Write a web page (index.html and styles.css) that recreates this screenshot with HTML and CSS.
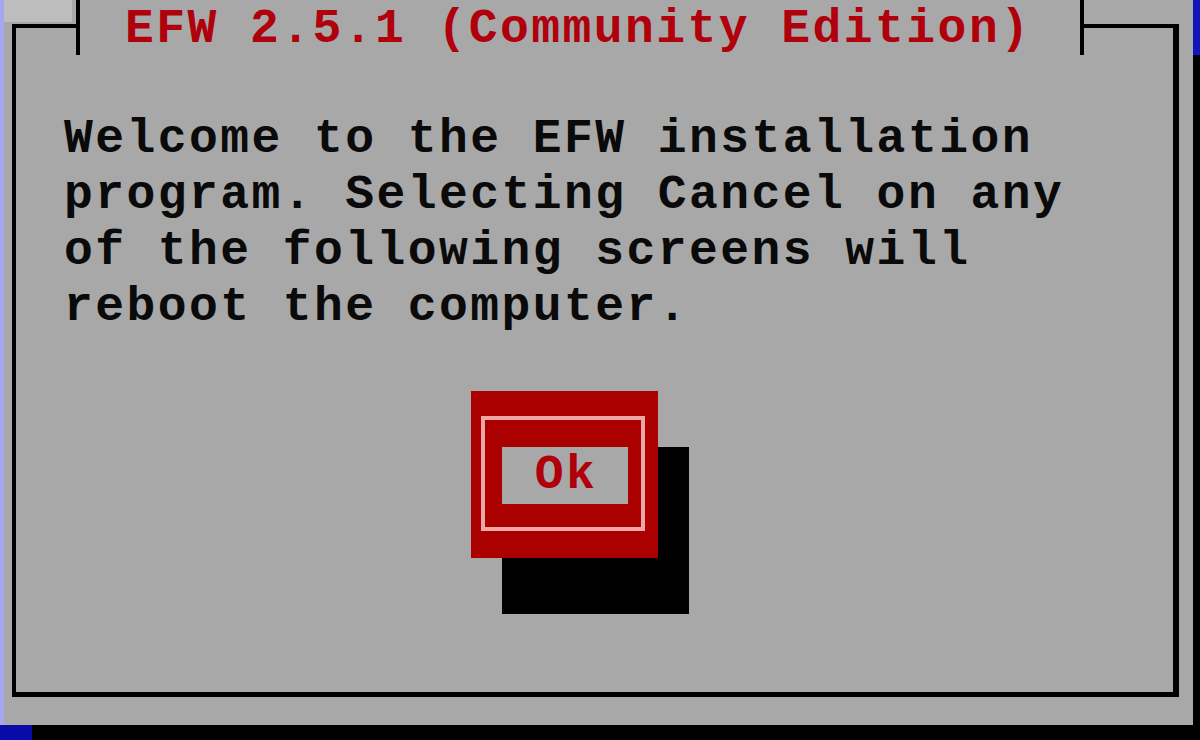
FILE: index.html
```html
<!DOCTYPE html>
<html lang="en">
<head>
<meta charset="utf-8">
<title>EFW 2.5.1 (Community Edition)</title>
<link rel="stylesheet" href="styles.css">
</head>
<body>
  <div class="edge-left"></div>
  <main class="panel">
    <div class="glitch"></div>
    <section class="frame">
      <h1 class="title">EFW 2.5.1 (Community Edition)</h1>
      <p class="message">Welcome to the EFW installation<br>program. Selecting Cancel on any<br>of the following screens will<br>reboot the computer.</p>
      <button class="btn" type="button">
        <span class="btn-ring"><span class="btn-label">Ok</span></span>
      </button>
    </section>
  </main>
  <div class="edge-right"></div>
  <div class="edge-bottom"></div>
</body>
</html>
```

FILE: styles.css
```css
html, body {
  margin: 0;
  padding: 0;
}

body {
  width: 1200px;
  height: 740px;
  overflow: hidden;
  background: #000;
  display: grid;
  grid-template-columns: 4px 1189px 7px;
  grid-template-rows: 725px 15px;
  font-family: "Liberation Mono", "DejaVu Sans Mono", monospace;
  font-weight: bold;
  font-size: 48px;
  letter-spacing: 2.45px;
}

.edge-left {
  background: #a6a6ee;
}

.edge-right {
  background: linear-gradient(#1414b8 0 55px, #000 55px);
}

.edge-bottom {
  grid-column: 1 / -1;
  background: linear-gradient(90deg, #0a0aa8 0 32px, #000 32px);
}

.panel {
  position: relative;
  background: #a8a8a8;
  padding: 24px 14px 28px 8px;
  box-sizing: border-box;
  display: flex;
}

.glitch {
  position: absolute;
  left: 0;
  top: 0;
  width: 68px;
  height: 22px;
  background: #bdbdbd;
}

.frame {
  position: relative;
  flex: 1;
  border: solid #000;
  border-width: 4px 6px 5px 4px;
  display: flex;
  flex-direction: column;
  align-items: flex-start;
}

.title {
  position: absolute;
  left: 60px;
  top: -28px;
  width: 1008px;
  height: 55px;
  box-sizing: border-box;
  margin: 0;
  padding: 2px 0 0 45px;
  border-left: 4px solid #000;
  border-right: 4px solid #000;
  background: #a8a8a8;
  color: #b0000c;
  font-size: 48px;
  font-weight: bold;
  line-height: 55px;
  white-space: pre;
  overflow: hidden;
}

.message {
  margin: 83px 0 0 48px;
  color: #0a0a0a;
  line-height: 56px;
  white-space: nowrap;
}

.btn {
  margin: 56px 0 0 455px;
  width: 187px;
  height: 167px;
  box-sizing: border-box;
  padding: 25px 13px 27px 10px;
  border: 0;
  background: #aa0000;
  box-shadow: 31px 56px 0 #000;
  display: flex;
  font: inherit;
  letter-spacing: inherit;
  cursor: pointer;
}

.btn-ring {
  flex: 1;
  border: 4px solid #eea6a6;
  padding: 27px 13px 23px 17px;
  display: flex;
}

.btn-label {
  flex: 1;
  background: #a8a8a8;
  color: #b0000c;
  line-height: 56px;
  text-align: center;
  text-indent: 2px;
}
```
